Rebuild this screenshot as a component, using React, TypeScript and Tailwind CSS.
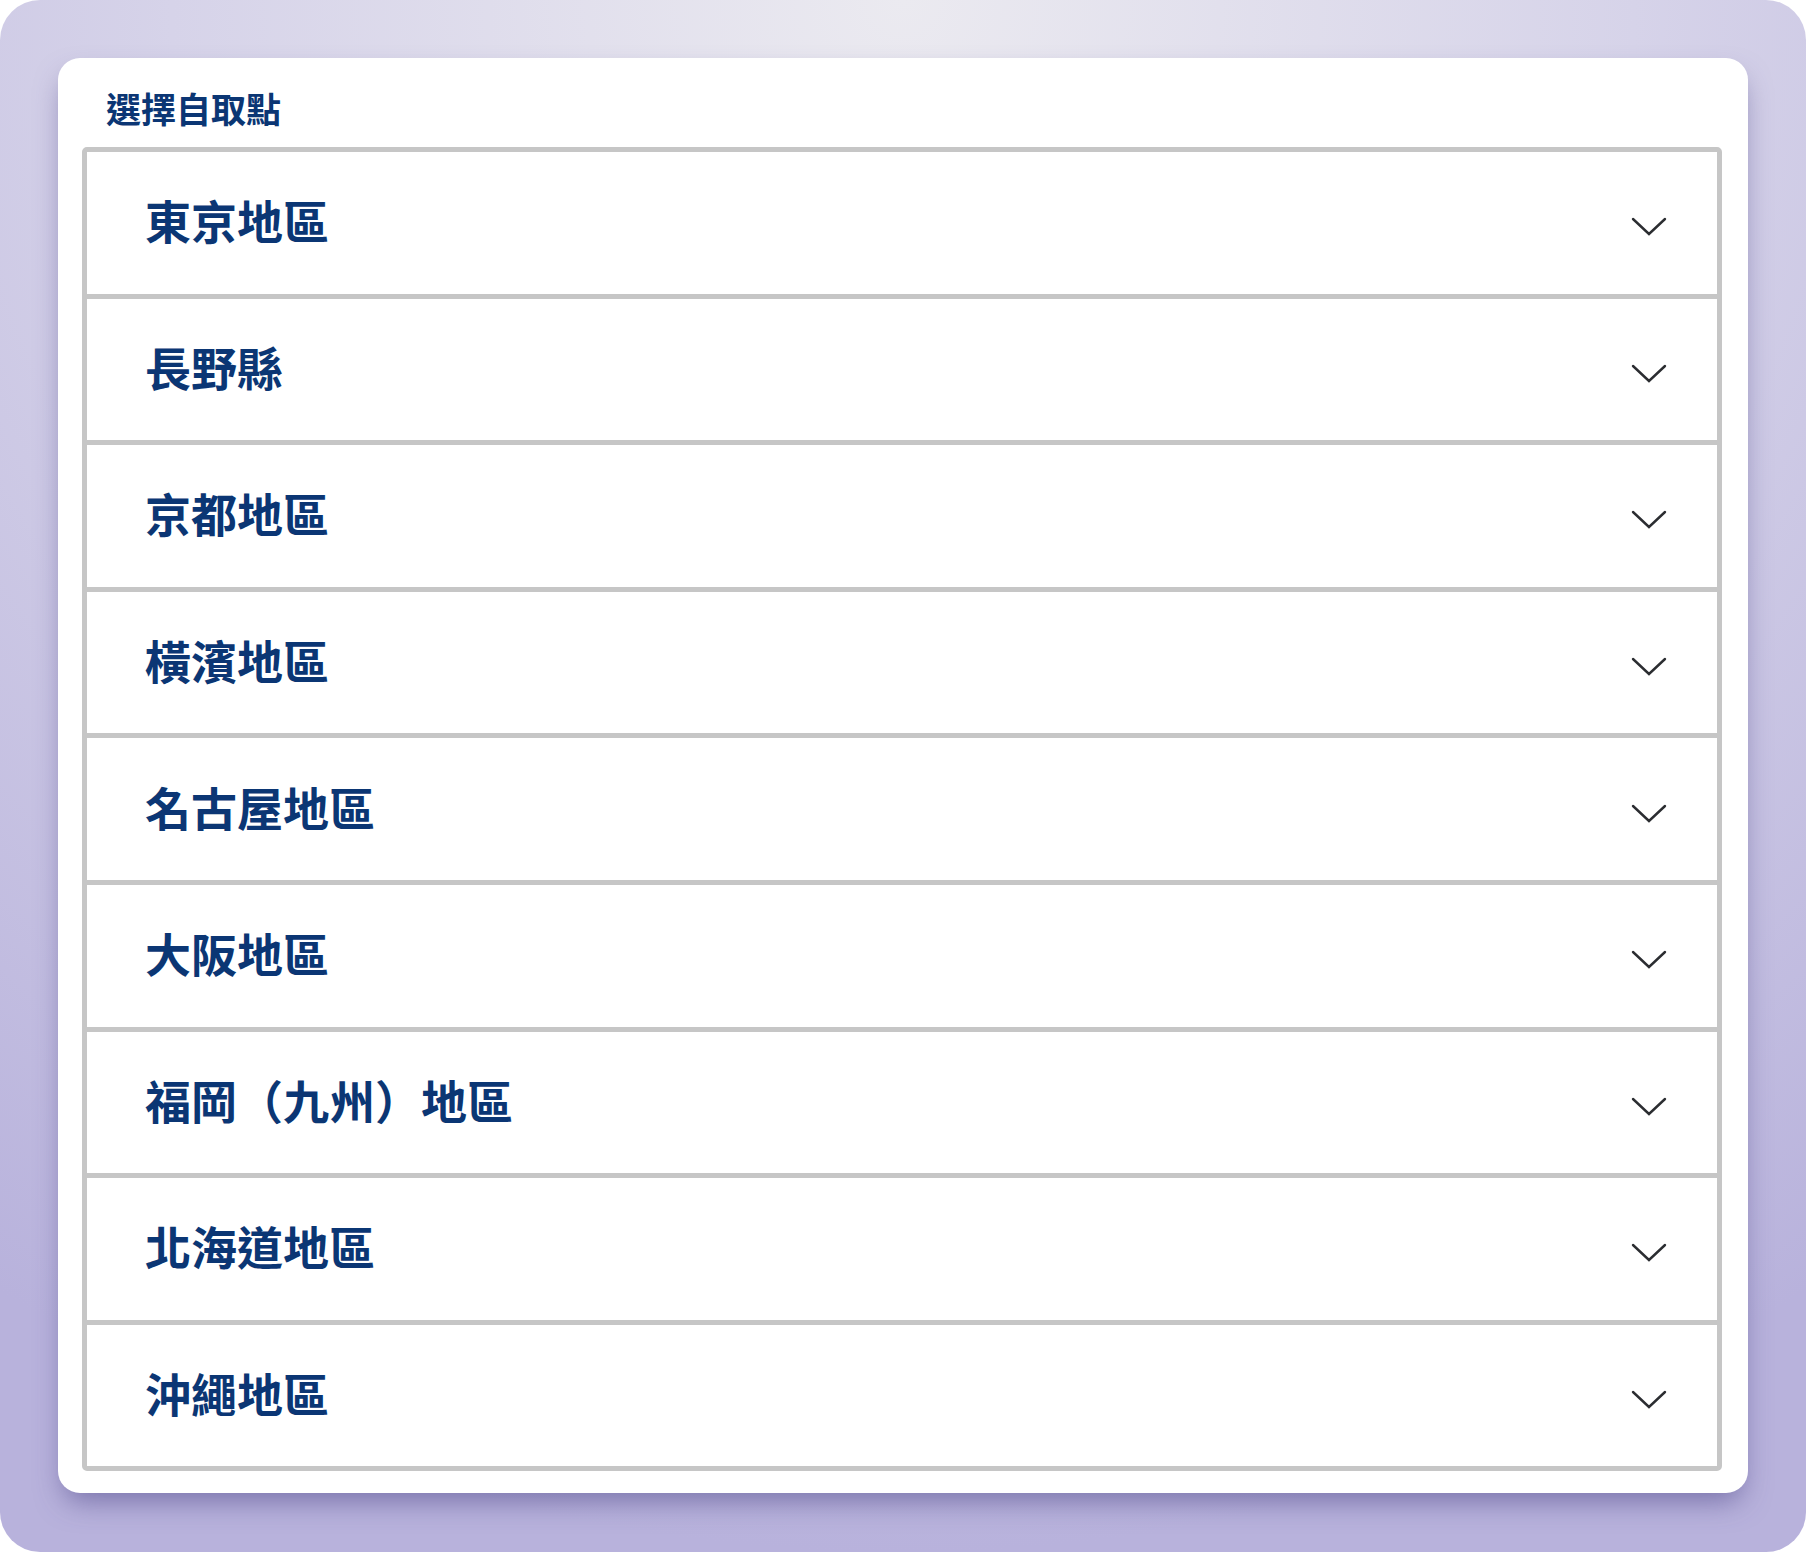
const regions = [
  "東京地區",
  "長野縣",
  "京都地區",
  "橫濱地區",
  "名古屋地區",
  "大阪地區",
  "福岡（九州）地區",
  "北海道地區",
  "沖繩地區",
];

function Chevron() {
  return (
    <svg width="36" height="20" viewBox="0 0 36 20" fill="none" className="shrink-0 mt-[9px]">
      <path d="M2 2 L18 17 L34 2" stroke="#2b2d31" strokeWidth="2.4" strokeLinecap="round" strokeLinejoin="miter" />
    </svg>
  );
}

export default function App() {
  return (
    <div className="min-h-screen bg-white font-['Noto_Sans_CJK_TC','Noto_Sans',sans-serif]">
      <div className="h-[1552px] w-full rounded-[40px] bg-[radial-gradient(ellipse_90%_100%_at_50%_0%,#ebeaf0_0%,#d6d3e9_45%,#b8b2dc_100%)] pt-[58px] px-[58px]">
        <div className="bg-white rounded-[22px] shadow-[0_14px_28px_-6px_rgba(70,62,130,0.55)] pt-[30px] pb-[22px] pl-[24px] pr-[26px]">
          <h2 className="pl-[24px] text-[35px] leading-[40px] font-bold text-[#0b3674] mb-[19px]">
            選擇自取點
          </h2>
          <div className="border-[5px] border-[#c6c6c6] rounded-[5px] overflow-hidden">
            {regions.map((name, i) => (
              <div
                key={name}
                className={`h-[141.6px] flex items-center justify-between pl-[58px] pr-[50px] ${
                  i < regions.length - 1 ? "border-b-[5px] border-[#c6c6c6] box-content" : ""
                }`}
              >
                <span className="text-[46px] font-bold text-[#0b3674] leading-none mb-[7px]">{name}</span>
                <Chevron />
              </div>
            ))}
          </div>
        </div>
      </div>
    </div>
  );
}
